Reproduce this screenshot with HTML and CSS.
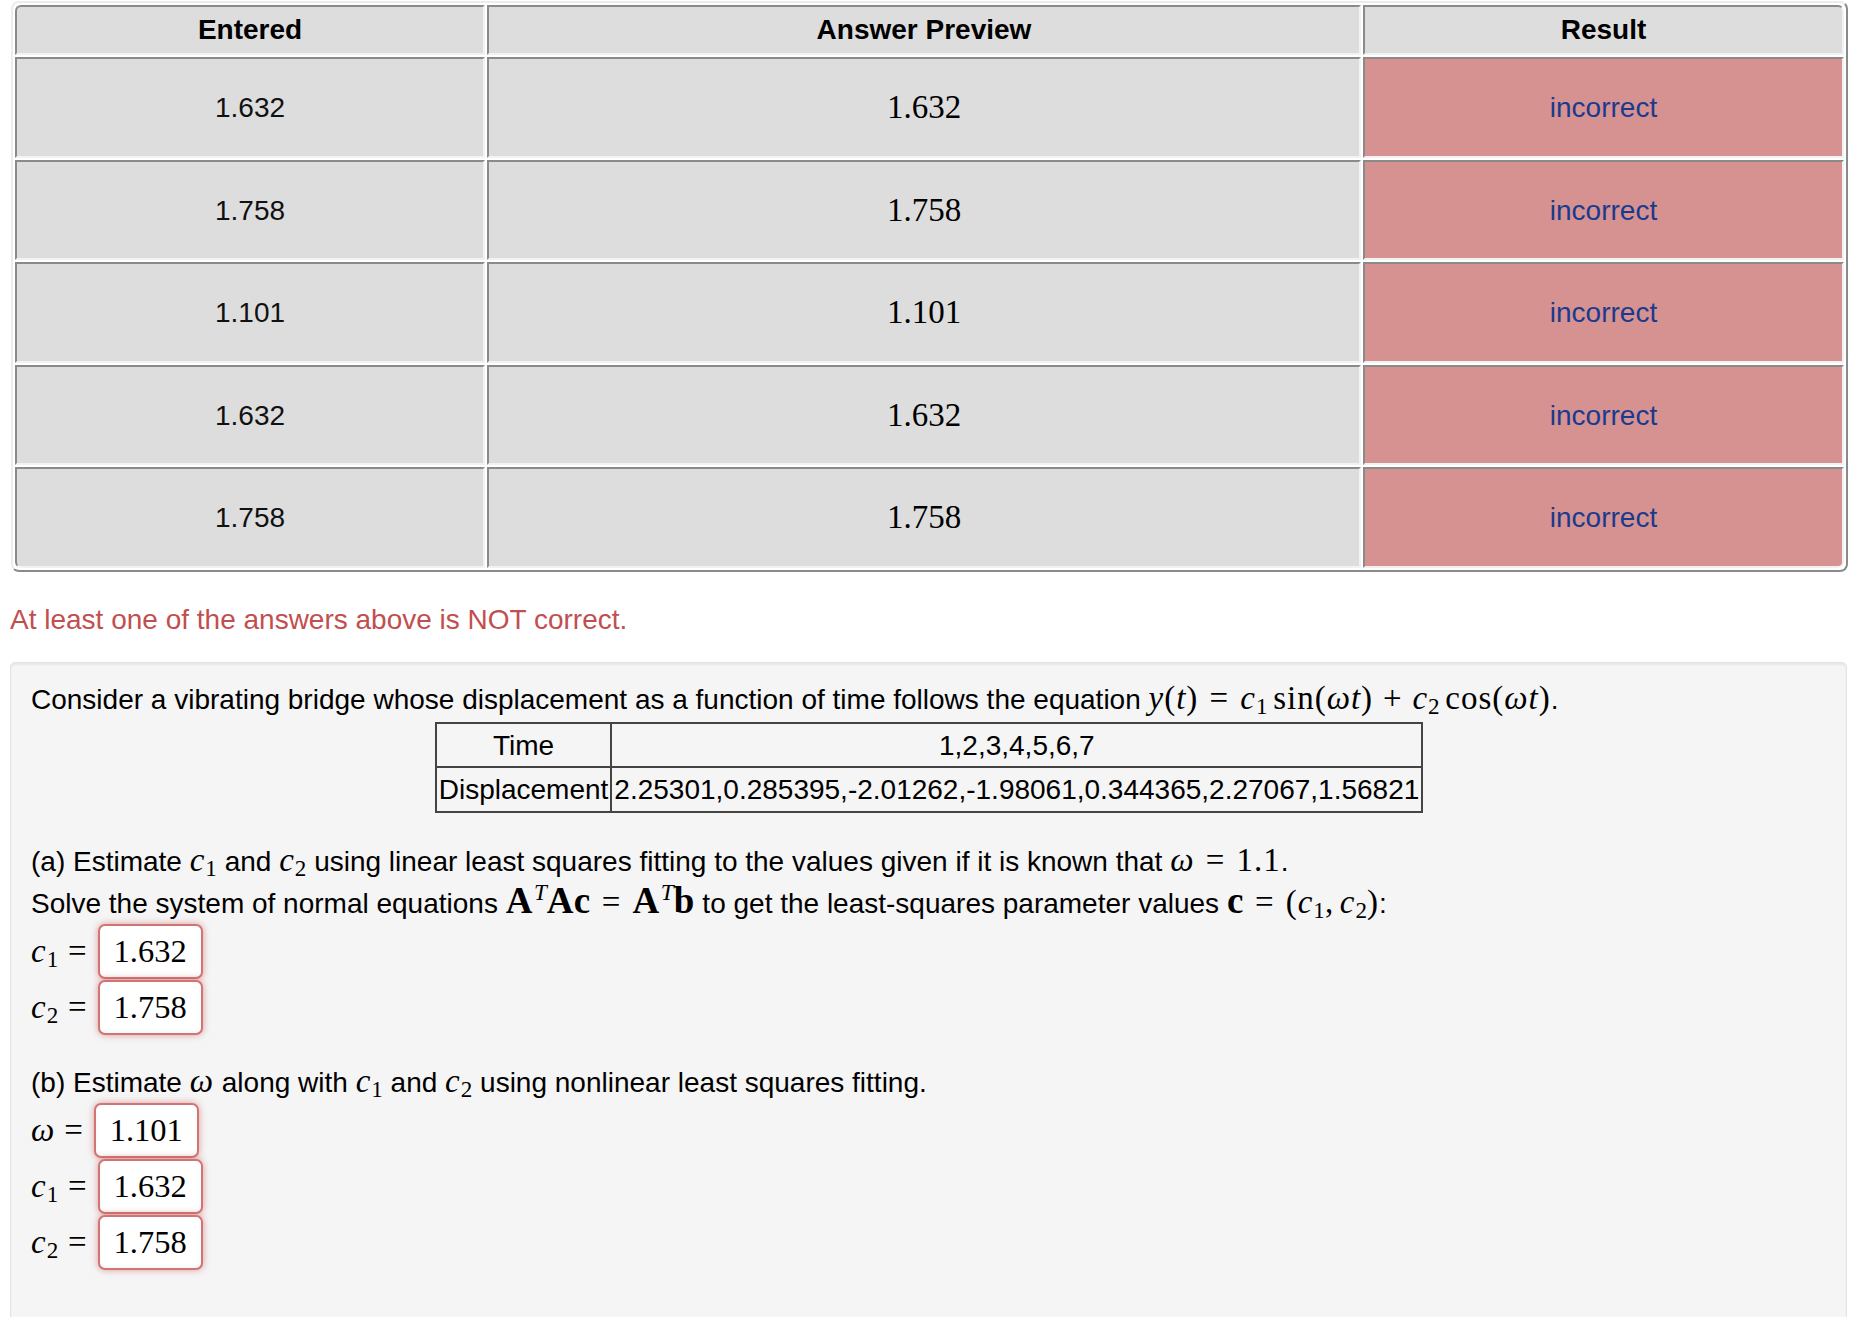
FILE: index.html
```html
<!DOCTYPE html>
<html>
<head>
<meta charset="utf-8">
<title>Attempt results</title>
<link rel="stylesheet" href="styles.css">
</head>
<body>
<div class="page">
  <table class="results">
    <thead>
      <tr>
        <th class="col-entered corner-tl">Entered</th>
        <th class="col-preview">Answer Preview</th>
        <th class="col-result corner-tr">Result</th>
      </tr>
    </thead>
    <tbody>
      <tr><td>1.632</td><td class="preview">1.632</td><td class="result">incorrect</td></tr>
      <tr><td>1.758</td><td class="preview">1.758</td><td class="result">incorrect</td></tr>
      <tr><td>1.101</td><td class="preview">1.101</td><td class="result">incorrect</td></tr>
      <tr><td>1.632</td><td class="preview">1.632</td><td class="result">incorrect</td></tr>
      <tr><td class="corner-bl">1.758</td><td class="preview">1.758</td><td class="result corner-br">incorrect</td></tr>
    </tbody>
  </table>

  <div class="status">At least one of the answers above is NOT correct.</div>

  <div class="problem">
    <div class="line first">Consider a vibrating bridge whose displacement as a function of time follows the equation <span class="m"><i>y</i>(<i>t</i>)<span class="rel">=</span><i>c</i><sub>1</sub><span class="fn">sin</span>(<i>ωt</i>)<span class="bin">+</span><i>c</i><sub>2</sub><span class="fn">cos</span>(<i>ωt</i>)</span>.</div>

    <table class="data">
      <tr><td class="hdr">Time</td><td class="vals center">1,2,3,4,5,6,7</td></tr>
      <tr><td class="hdr">Displacement</td><td class="vals">2.25301,0.285395,-2.01262,-1.98061,0.344365,2.27067,1.56821</td></tr>
    </table>

    <div class="line part">(a) Estimate <span class="m"><i>c</i><sub>1</sub></span> and <span class="m"><i>c</i><sub>2</sub></span> using linear least squares fitting to the values given if it is known that <span class="m"><i>ω</i><span class="rel">=</span>1.1</span>.</div>
    <div class="line">Solve the system of normal equations <span class="m"><b>A</b><sup>T</sup><b>Ac</b><span class="rel">=</span><b>A</b><sup>T</sup><b>b</b></span> to get the least-squares parameter values <span class="m"><b>c</b><span class="rel">=</span>(<i>c</i><sub>1</sub>,<span class="thin"></span><i>c</i><sub>2</sub>)</span>:</div>

    <div class="answer"><span class="m label"><i>c</i><sub>1</sub><span class="rel">=</span></span><span class="box">1.632</span></div>
    <div class="answer"><span class="m label"><i>c</i><sub>2</sub><span class="rel">=</span></span><span class="box">1.758</span></div>

    <div class="line part-b">(b) Estimate <span class="m"><i>ω</i></span> along with <span class="m"><i>c</i><sub>1</sub></span> and <span class="m"><i>c</i><sub>2</sub></span> using nonlinear least squares fitting.</div>

    <div class="answer"><span class="m label"><i class="omega">ω</i><span class="rel">=</span></span><span class="box">1.101</span></div>
    <div class="answer"><span class="m label"><i>c</i><sub>1</sub><span class="rel">=</span></span><span class="box">1.632</span></div>
    <div class="answer"><span class="m label"><i>c</i><sub>2</sub><span class="rel">=</span></span><span class="box">1.758</span></div>
  </div>
</div>
</body>
</html>
```

FILE: styles.css
```css
* {
  box-sizing: border-box;
}

html, body {
  margin: 0;
  padding: 0;
  background: #ffffff;
}

body {
  font-family: "Liberation Sans", Arial, sans-serif;
  font-size: 28px;
  color: #000;
}

.page {
  padding: 1px 5px 0 10px;
}

/* ---------- results table ---------- */
.results {
  margin-left: 1px;
  width: 1837px;
  table-layout: fixed;
  border-collapse: separate;
  border-spacing: 2px;
  border: 2px solid;
  border-color: #ececec #8a8a8a #8a8a8a #ececec;
  border-radius: 8px;
}

.results th,
.results td {
  background: #dddddd;
  border: 2px solid;
  border-color: #8a8a8a #f2f2f2 #f2f2f2 #8a8a8a;
  text-align: center;
  vertical-align: middle;
}

.results th {
  font-weight: bold;
  line-height: 32px;
  padding: 7px 0;
}

.results td {
  line-height: 33px;
  padding: 32px 0 31.5px;
  color: #111;
}

.col-entered { width: 470px; }
.col-preview { width: 874px; }
.col-result { width: 481px; }

.corner-tl { border-top-left-radius: 6px; }
.corner-tr { border-top-right-radius: 6px; }
.corner-bl { border-bottom-left-radius: 6px; }
.corner-br { border-bottom-right-radius: 6px; }

.results td.preview {
  font-family: "Liberation Serif", "Times New Roman", serif;
  font-size: 33px;
  color: #000;
}

.results td.result {
  background: #d69191;
  color: #1a3a8e;
}

/* ---------- status ---------- */
.status {
  margin-top: 32px;
  line-height: 32px;
  color: #c24f4f;
}

/* ---------- problem well ---------- */
.problem {
  margin-top: 26px;
  width: 1837px;
  background: #f5f5f5;
  border: 1px solid #e3e3e3;
  border-radius: 5px;
  box-shadow: inset 0 2px 2px rgba(0, 0, 0, 0.06);
  padding: 18px 19px 43px 20px;
  min-height: 660px;
}

.line {
  line-height: 41px;
  white-space: nowrap;
}

.line.first {
  line-height: 35px;
}

.m {
  font-family: "Liberation Serif", "Times New Roman", serif;
  font-size: 33px;
  letter-spacing: 0.03em;
}

.m i {
  font-style: italic;
}

.m i.omega {
  letter-spacing: 0;
}

.m b {
  font-weight: bold;
  font-size: 1.12em;
  line-height: 0;
  letter-spacing: 0.01em;
}

.m sub {
  font-size: 0.7em;
  vertical-align: -0.2em;
  line-height: 0;
  font-style: normal;
  letter-spacing: 0;
}

.m sup {
  font-size: 0.7em;
  vertical-align: 0.55em;
  line-height: 0;
  font-style: italic;
  letter-spacing: 0;
  margin-left: 0.05em;
}

.rel {
  margin: 0 0.34em;
}

.bin {
  margin: 0 0.3em;
}

.fn {
  margin-left: 0.17em;
}

.thin {
  display: inline-block;
  width: 0.17em;
}

/* data table */
.data {
  margin: 5px auto 0;
  border-collapse: collapse;
  border: 2px solid #444;
}

.data td {
  border: 2px solid #444;
  padding: 5px 2px 4.5px;
  line-height: 33px;
}

.data td.hdr {
  text-align: center;
}

.data td.center {
  text-align: center;
}

.part {
  margin-top: 27px;
}

.part-b {
  margin-top: 25px;
}

/* answers */
.answer {
  display: flex;
  align-items: center;
  height: 56px;
}

.label {
  display: inline-block;
}

.label .rel {
  margin-left: 0.3em;
  margin-right: 0.3em;
}

.box {
  display: inline-flex;
  align-items: center;
  height: 55px;
  padding: 0 14px;
  background: #ffffff;
  border: 2px solid #d07474;
  border-radius: 7px;
  box-shadow: 0 0 7px rgba(200, 80, 80, 0.55), inset 0 -2px 4px rgba(0, 0, 0, 0.04);
  font-family: "Liberation Serif", "Times New Roman", serif;
  font-size: 32.5px;
  color: #000;
}
```
